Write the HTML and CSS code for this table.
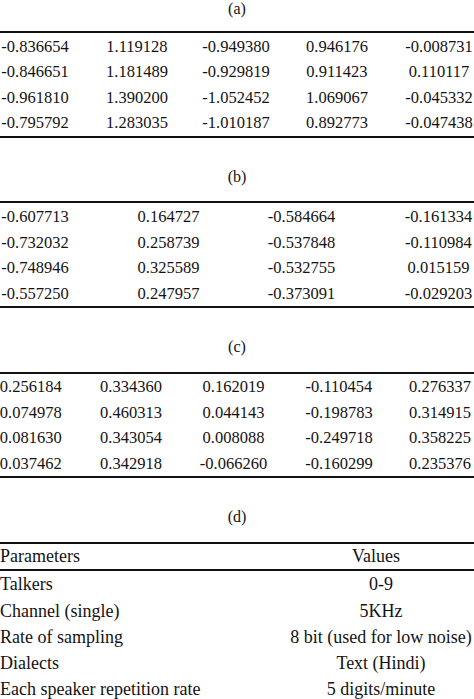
FILE: index.html
```html
<!DOCTYPE html>
<html lang="en">
<head>
    <meta charset="UTF-8">
    <meta name="viewport" content="width=device-width, initial-scale=1.0">
    <title>Feature Tables</title>
    <link rel="stylesheet" href="styles.css">
</head>
<body>
    <div class="page">
        <!-- (a) -->
        <div class="section first">
            <div class="caption">(a)</div>
            <div class="table">
                <div class="row cols-a"><span>-0.836654</span><span>1.119128</span><span>-0.949380</span><span>0.946176</span><span>-0.008731</span></div>
                <div class="row cols-a"><span>-0.846651</span><span>1.181489</span><span>-0.929819</span><span>0.911423</span><span>0.110117</span></div>
                <div class="row cols-a"><span>-0.961810</span><span>1.390200</span><span>-1.052452</span><span>1.069067</span><span>-0.045332</span></div>
                <div class="row cols-a"><span>-0.795792</span><span>1.283035</span><span>-1.010187</span><span>0.892773</span><span>-0.047438</span></div>
            </div>
        </div>

        <!-- (b) -->
        <div class="section">
            <div class="caption">(b)</div>
            <div class="table">
                <div class="row cols-b"><span>-0.607713</span><span>0.164727</span><span>-0.584664</span><span>-0.161334</span></div>
                <div class="row cols-b"><span>-0.732032</span><span>0.258739</span><span>-0.537848</span><span>-0.110984</span></div>
                <div class="row cols-b"><span>-0.748946</span><span>0.325589</span><span>-0.532755</span><span>0.015159</span></div>
                <div class="row cols-b"><span>-0.557250</span><span>0.247957</span><span>-0.373091</span><span>-0.029203</span></div>
            </div>
        </div>

        <!-- (c) -->
        <div class="section">
            <div class="caption">(c)</div>
            <div class="table">
                <div class="row cols-c"><span>0.256184</span><span>0.334360</span><span>0.162019</span><span>-0.110454</span><span>0.276337</span></div>
                <div class="row cols-c"><span>0.074978</span><span>0.460313</span><span>0.044143</span><span>-0.198783</span><span>0.314915</span></div>
                <div class="row cols-c"><span>0.081630</span><span>0.343054</span><span>0.008088</span><span>-0.249718</span><span>0.358225</span></div>
                <div class="row cols-c"><span>0.037462</span><span>0.342918</span><span>-0.066260</span><span>-0.160299</span><span>0.235376</span></div>
            </div>
        </div>

        <!-- (d) -->
        <div class="section">
            <div class="caption">(d)</div>
            <div class="table params">
                <div class="param-row head"><span>Parameters</span><span class="head-value">Values</span></div>
                <div class="param-row"><span>Talkers</span><span>0-9</span></div>
                <div class="param-row"><span>Channel (single)</span><span>5KHz</span></div>
                <div class="param-row"><span>Rate of sampling</span><span>8 bit (used for low noise)</span></div>
                <div class="param-row"><span>Dialects</span><span>Text (Hindi)</span></div>
                <div class="param-row"><span>Each speaker repetition rate</span><span>5 digits/minute</span></div>
            </div>
        </div>
    </div>
</body>
</html>
```

FILE: styles.css
```css
body {
    margin: 0;
    padding: 0;
    background-color: #fff;
    color: #151213;
    font-family: "Liberation Serif", "Times New Roman", serif;
    overflow: hidden;
}
.page {
    width: 474px;
    overflow: hidden;
}
.section {
    margin-top: 29px;
}
.caption {
    text-align: center;
    font-size: 16px;
    line-height: 20px;
    margin-bottom: 14.5px;
}
.section.first {
    margin-top: 0;
}
.section.first .caption {
    line-height: 17px;
    margin-bottom: 14px;
}
.table {
    border-top: 2px solid #111;
    border-bottom: 2px solid #111;
    padding-top: 0.8px;
    overflow: hidden;
}
.row {
    display: grid;
    font-size: 16.5px;
    line-height: 25.5px;
    white-space: nowrap;
}
.row span {
    text-align: center;
}
.cols-a {
    grid-template-columns: 102px 102px 96px 106px 98px;
    margin-left: -16px;
}
.cols-b {
    grid-template-columns: 134px 133px 133px 141px;
    margin-left: -32px;
}
.cols-c {
    grid-template-columns: 100px 100.5px 104.5px 106.5px 95.5px;
    margin-left: -19.25px;
}
.params {
    padding-top: 0;
    border-bottom: none;
}
.param-row {
    display: grid;
    grid-template-columns: 288px 1fr;
    font-size: 18px;
    line-height: 26.2px;
    white-space: nowrap;
}
.param-row span:last-child {
    text-align: center;
}
.param-row.head {
    line-height: 25.6px;
    border-bottom: 2px solid #111;
}
.head-value {
    padding-right: 10px;
}
```
